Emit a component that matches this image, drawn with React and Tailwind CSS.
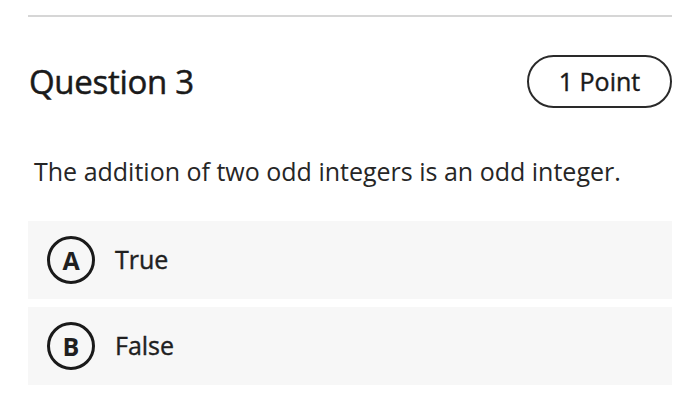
import React from 'react';

const options = [
  { letter: 'A', label: 'True' },
  { letter: 'B', label: 'False' },
];

const App = () => {
  return (
    <div className="w-[700px] h-[419px] bg-white text-[#1f1f1f]" style={{ fontFamily: '"Open Sans", sans-serif' }}>
      <div className="px-[28px] pt-[15px]">
        <div className="h-[2px] bg-[#d6d6d6]" />
        <div className="flex items-center justify-between mt-[38px]">
          <h1 className="text-[33px] leading-none pl-[1px] tracking-[-0.3px] [-webkit-text-stroke:0.5px_#1a1a1a] text-[#1a1a1a]">Question 3</h1>
          <div className="h-[53px] w-[145px] rounded-full border-2 border-[#2a2a2a] flex items-center justify-center text-[25px] [-webkit-text-stroke:0.4px_#1a1a1a] text-[#1a1a1a]">
            1 Point
          </div>
        </div>
        <p className="mt-[51px] pl-[6px] text-[25px] leading-none text-[#262626]">
          The addition of two odd integers is an odd integer.
        </p>
        <div className="mt-[37px] flex flex-col gap-[8px]">
          {options.map((o) => (
            <div key={o.letter} className="h-[78px] bg-[#f7f7f7] flex items-center pl-[19px]">
              <div className="w-[48px] h-[48px] rounded-full border-[3px] border-[#1a1a1a] flex items-center justify-center text-[25px] font-bold leading-none">
                {o.letter}
              </div>
              <span className="ml-[20px] text-[25px] [-webkit-text-stroke:0.4px_#1f1f1f] text-[#1f1f1f]">{o.label}</span>
            </div>
          ))}
        </div>
      </div>
    </div>
  );
};

export default App;
